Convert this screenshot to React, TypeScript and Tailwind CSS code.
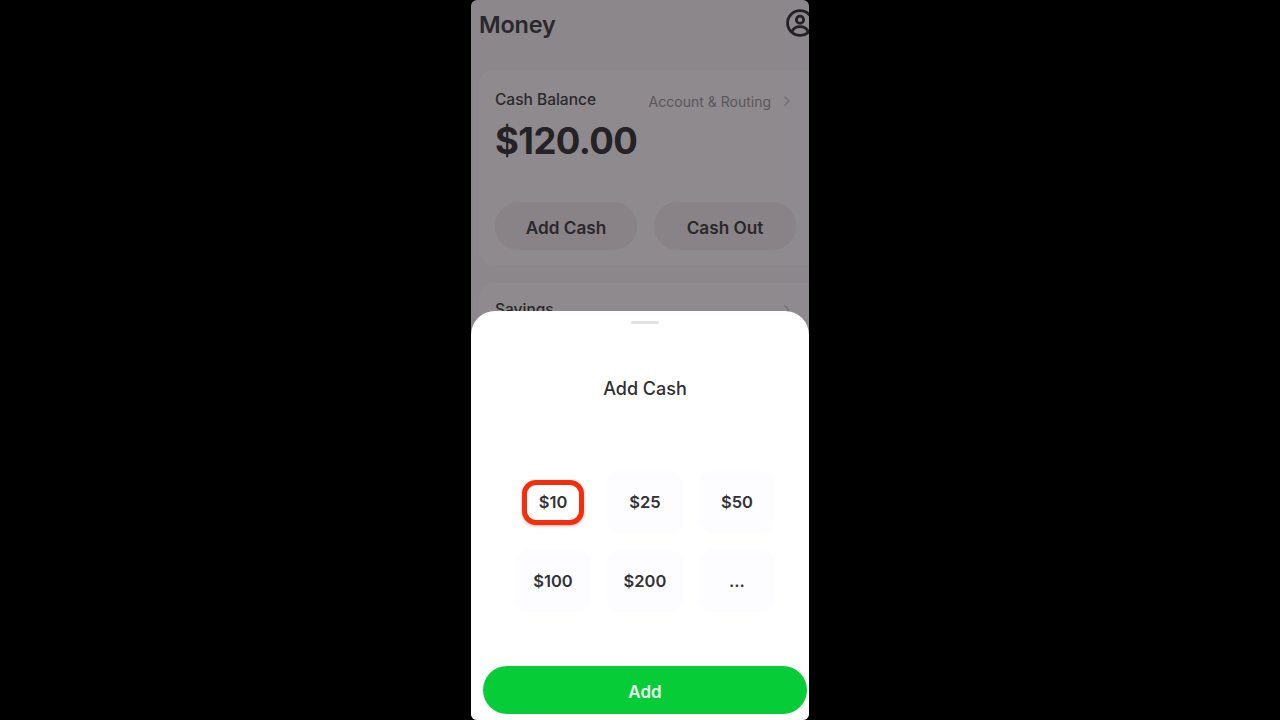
import React from "react";

const amounts = ["$25", "$50", "$100", "$200", "..."];

function Cell({ label }: { label: string }) {
  return (
    <div className="flex h-[62px] w-[76px] items-center justify-center rounded-[14px] bg-[#fdfcfe] text-[16.5px] font-semibold text-[#333235]">
      {label}
    </div>
  );
}

export default function App() {
  return (
    <div className="flex h-[720px] w-full justify-center bg-black font-['Inter',sans-serif]">
      <div className="relative h-[720px] w-[338px] overflow-hidden rounded-[6px] bg-[#8b878a]">
        <div className="flex h-[50px] items-center justify-between pl-2">
          <span className="text-[23.5px] font-semibold tracking-[-0.2px] text-[#2a282b]">Money</span>
          <svg width="30" height="30" viewBox="0 0 28 28" fill="none" stroke="#232124" strokeWidth="2.6" className="mr-[-6px] mt-[-4px] shrink-0">
            <circle cx="14" cy="14" r="11.6" />
            <circle cx="14" cy="11" r="3.4" />
            <path d="M6.5 22c1.5-3.4 4.2-4.6 7.5-4.6s6 1.2 7.5 4.6" />
          </svg>
        </div>

        <div className="ml-2 mt-5 h-[195px] rounded-l-[14px] bg-[#8e8a8d] pl-4 pr-[18px] pt-[19px]">
          <div className="flex items-center justify-between">
            <span className="text-[15.5px] font-medium leading-[18px] text-[#2a282b]">Cash Balance</span>
            <div className="mt-1 flex items-center gap-[12px]">
              <span className="text-[14px] leading-[18px] text-[#5a575a]">Account &amp; Routing</span>
              <svg width="8" height="12" viewBox="0 0 8 12" fill="none" stroke="#6f6c6f" strokeWidth="1.3" className="mt-[-2px]">
                <path d="M1.5 1.5 6 6l-4.5 4.5" />
              </svg>
            </div>
          </div>
          <div className="mt-[7px] text-[36.5px] font-bold leading-[46px] tracking-[-0.6px] text-[#242225]">$120.00</div>
          <div className="mt-[38px] flex gap-[17px]">
            <div className="flex h-12 w-[142px] shrink-0 items-center justify-center rounded-full bg-[#898286] pt-[4px] text-[17.2px] font-semibold text-[#2a282b]">Add Cash</div>
            <div className="flex h-12 w-[142px] shrink-0 items-center justify-center rounded-full bg-[#898286] pt-[4px] text-[17.2px] font-semibold text-[#2a282b]">Cash Out</div>
          </div>
        </div>

        <div className="ml-2 mt-[18px] flex h-[100px] items-start justify-between rounded-tl-[14px] bg-[#8e8a8d] pl-4 pr-[18px] pt-[18px]">
          <span className="text-[15.5px] font-medium leading-[18px] text-[#2a282b]">Savings</span>
          <svg width="8" height="12" viewBox="0 0 8 12" fill="none" stroke="#6f6c6f" strokeWidth="1.3" className="mt-[3px]">
            <path d="M1.5 1.5 6 6l-4.5 4.5" />
          </svg>
        </div>

        <div className="absolute inset-x-0 bottom-0 flex h-[409px] flex-col items-center rounded-t-[24px] bg-white pl-[10px]">
          <div className="mt-[10px] h-[3px] w-[28px] rounded-full bg-[#e2e2e2]" />
          <div className="mt-[54px] text-[18px] font-medium leading-[22px] text-[#2f2e31]">Add Cash</div>
          <div className="mt-[71px] grid grid-cols-[76px_76px_76px] gap-x-4 gap-y-[17px]">
            <div className="flex h-[62px] items-center justify-center">
              <div className="flex h-[45px] w-[62px] items-center justify-center rounded-[14px] border-[5px] border-[#f42d0c] bg-white text-[16.5px] font-semibold text-[#333235] shadow-[0_1px_3px_rgba(120,30,10,0.35)]">
                $10
              </div>
            </div>
            {amounts.map((a) => (
              <Cell key={a} label={a} />
            ))}
          </div>
          <div className="mt-[54px] flex h-12 w-[324px] items-center justify-center rounded-full bg-[#06cc37] pt-[5px] text-[17px] font-semibold text-[#ecfbef]">
            Add
          </div>
        </div>
      </div>
    </div>
  );
}
